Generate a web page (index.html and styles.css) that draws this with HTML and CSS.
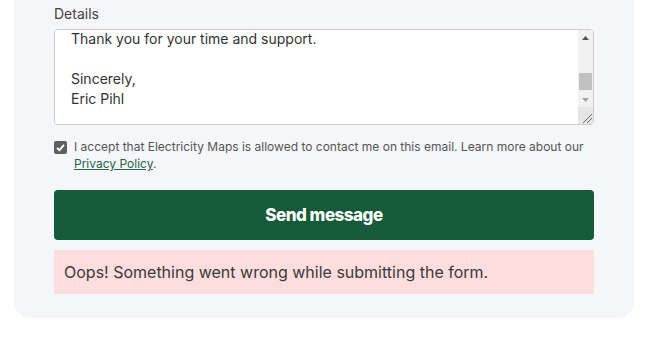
FILE: index.html
```html
<!DOCTYPE html>
<html lang="en">
<head>
    <meta charset="UTF-8">
    <meta name="viewport" content="width=device-width, initial-scale=1.0">
    <title>Contact</title>
    <link rel="stylesheet" href="styles.css">
</head>
<body>

    <div class="page">
        <form class="contact-card" id="contactForm">
            <label class="field-label" for="details">Details</label>
            <div class="details-wrap">
                <textarea id="details" name="details" class="details-input">Hi Electricity Maps team,

I am working on a project about the carbon intensity of electricity grids and would love to learn more about your data.

Could you share some information about the coverage and the methodology behind your estimates?

Thank you for your time and support.

Sincerely,
Eric Pihl</textarea>
                <!-- scrollbar drawn by hand, the browser hides the real one -->
                <div class="scrollbar">
                    <div class="sb-btn sb-up"></div>
                    <div class="sb-track"><div class="sb-thumb"></div></div>
                    <div class="sb-btn sb-down"></div>
                    <div class="sb-resizer"></div>
                </div>
            </div>

            <div class="consent">
                <input type="checkbox" id="consent" class="consent-box" checked>
                <label for="consent" class="consent-text">I accept that Electricity Maps is allowed to contact me on this email. Learn more about our <a href="#">Privacy Policy</a>.</label>
            </div>

            <button type="button" class="btn">Send message</button>

            <div class="form-error">Oops! Something went wrong while submitting the form.</div>
        </form>
    </div>

    <script>
        // keep the end of the message in view
        const details = document.getElementById('details');
        details.scrollTop = details.scrollHeight;
    </script>
</body>
</html>
```

FILE: styles.css
```css
body {
    margin: 0;
    background-color: #fff;
    font-family: Inter, "Noto Sans", sans-serif;
    color: #333;
}
.page {
    padding: 0 14px;
}
.contact-card {
    background-color: #f5f6fa;
    border-radius: 0 0 16px 16px;
    padding: 4px 40px 24px;
    display: flex;
    flex-direction: column;
}
.field-label {
    font-size: 14px;
    line-height: 20px;
    color: #444;
    margin-bottom: 5px;
}
.details-wrap {
    position: relative;
    height: 96px;
}
.details-input {
    display: block;
    box-sizing: border-box;
    width: 100%;
    height: 96px;
    margin: 0;
    padding: 12px 31px 15px 16px;
    border: 1px solid #ccc;
    border-radius: 4px;
    background-color: #fff;
    font-family: Inter, "Noto Sans", sans-serif;
    font-size: 14px;
    line-height: 20px;
    color: #333;
}
.scrollbar {
    position: absolute;
    top: 1px;
    right: 1px;
    bottom: 1px;
    width: 15px;
    display: flex;
    flex-direction: column;
    background-color: #f1f1f1;
    border-radius: 0 3px 3px 0;
    pointer-events: none;
}
.sb-btn {
    height: 15px;
    flex-shrink: 0;
    background-repeat: no-repeat;
    background-position: center;
}
.sb-up {
    background-image: url("data:image/svg+xml,%3Csvg xmlns='http://www.w3.org/2000/svg' width='7' height='4'%3E%3Cpath d='M0 4L3.5 0L7 4Z' fill='%23505050'/%3E%3C/svg%3E");
}
.sb-down {
    background-image: url("data:image/svg+xml,%3Csvg xmlns='http://www.w3.org/2000/svg' width='7' height='4'%3E%3Cpath d='M0 0L7 0L3.5 4Z' fill='%23a3a3a3'/%3E%3C/svg%3E");
}
.sb-track {
    flex: 1;
    display: flex;
    flex-direction: column;
    justify-content: flex-end;
    padding: 0 1px 2px;
}
.sb-thumb {
    height: 17px;
    background-color: #c1c1c1;
}
.sb-resizer {
    height: 17px;
    flex-shrink: 0;
    background-color: #e6e6e6;
    background-repeat: no-repeat;
    background-position: right 1px bottom 1px;
    background-image: url("data:image/svg+xml,%3Csvg xmlns='http://www.w3.org/2000/svg' width='10' height='10'%3E%3Cpath d='M1 10L10 1M5 10L10 5' stroke='%23666' stroke-width='1'/%3E%3C/svg%3E");
}
.consent {
    display: flex;
    align-items: flex-start;
    gap: 7px;
    margin-top: 13px;
}
.consent-box {
    appearance: none;
    width: 13px;
    height: 13px;
    margin: 3px 0 0;
    flex-shrink: 0;
    border-radius: 2px;
    background-color: #5f5f5f;
    background-image: url("data:image/svg+xml,%3Csvg xmlns='http://www.w3.org/2000/svg' viewBox='0 0 13 13'%3E%3Cpath d='M3 6.8l2.4 2.4L10 3.9' fill='none' stroke='white' stroke-width='1.8'/%3E%3C/svg%3E");
}
.consent-text {
    font-size: 12px;
    line-height: 17px;
    color: #555;
}
.consent-text a {
    color: #2a6247;
}
.btn {
    margin-top: 18px;
    height: 50px;
    border: none;
    border-radius: 4px;
    background-color: #155a39;
    color: #fff;
    font-family: Inter, sans-serif;
    font-size: 17px;
    font-weight: 800;
    letter-spacing: -0.5px;
    cursor: pointer;
}
.form-error {
    margin-top: 10px;
    padding: 10px;
    background-color: #fddddd;
    font-size: 16px;
    line-height: 24px;
    color: #3a3a3a;
}
```
